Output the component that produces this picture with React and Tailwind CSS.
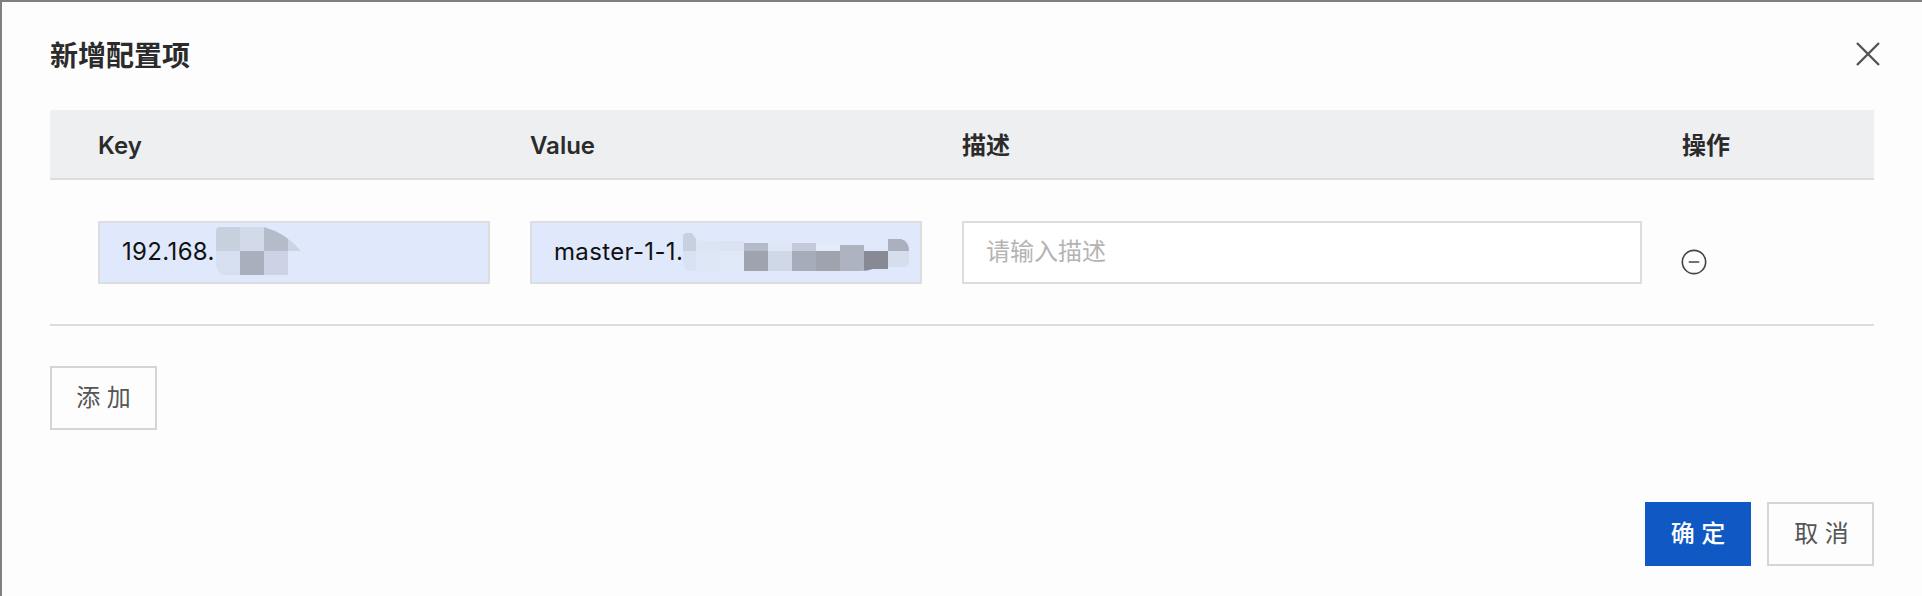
import React from 'react';
import { CircleMinus } from 'lucide-react';

const FONT = "font-['Inter','Noto_Sans_CJK_SC',sans-serif]";

// blurred bits of the redacted values, drawn as mosaic blocks
const KEY_MOSAIC = [
  [0, 6, 24, 24, '#c8d0de'], [24, 6, 24, 24, '#d2d9e8'], [48, 6, 24, 24, '#b4bbc9'], [72, 6, 13, 24, '#ccd3e2'],
  [0, 30, 24, 24, '#d5dff0'], [24, 30, 24, 24, '#a9afbc'], [48, 30, 24, 24, '#ccd3e5'],
];
const KEY_OUTLINE = 'M4 6 L48 6 Q70 12 85 30 L72 30 L72 54 L10 54 Q2 54 0 44 L0 10 Q0 6 4 6 Z';

const VALUE_MOSAIC = [
  [0, 12, 13, 18, '#c8d0de'], [13, 12, 24, 18, '#dde5f5'], [37, 12, 24, 18, '#dbe3f2'], [61, 12, 24, 18, '#b4bac8'],
  [85, 12, 24, 18, '#dfe6f5'], [109, 12, 24, 18, '#c4cad8'], [133, 12, 24, 18, '#e5ebf8'], [157, 12, 24, 18, '#aeb3c0'],
  [205, 12, 21, 18, '#aab0bd'],
  [0, 30, 13, 20, '#d9e2f2'], [13, 30, 24, 20, '#dfe7f6'], [37, 30, 24, 20, '#e0e8f7'], [61, 30, 24, 20, '#9ea3af'],
  [85, 30, 24, 20, '#d0d8e8'], [109, 30, 24, 20, '#a6acb9'], [133, 30, 24, 20, '#9fa3ae'], [157, 30, 24, 20, '#aeb3c1'],
  [181, 30, 24, 20, '#878a95'], [205, 30, 21, 20, '#d6deee'],
];
const VALUE_OUTLINE =
  'M4 12 L9 12 Q13 20 18 20 L61 20 L61 22 L157 22 L157 24 L181 24 L181 30 L205 30 L205 18 L218 18 Q226 20 226 30 L226 40 Q226 46 220 46 L205 46 L205 48 L190 48 Q184 50 178 50 L8 50 Q0 50 0 40 L0 16 Q0 12 4 12 Z';

const Mosaic = ({ id, cells, outline, width, className }) => (
  <svg width={width} height="56" className={`absolute top-[-2px] ${className}`}>
    <clipPath id={id}>
      <path d={outline} />
    </clipPath>
    <g clipPath={`url(#${id})`}>
      {cells.map(([x, y, w, h, fill]) => (
        <rect key={`${x}-${y}`} x={x} y={y} width={w} height={h} fill={fill} />
      ))}
    </g>
  </svg>
);

const FilledInput = ({ text, children }) => (
  <div className="relative flex h-[63px] w-[392px] items-center border-2 border-[#dcdde0] bg-[#e0e9fb] pl-[22px] text-[24px] tracking-[0.35px] text-[#111]">
    {text}
    {children}
  </div>
);

const Button = ({ children, className }) => (
  <button className={`flex items-center justify-center text-[24px] ${className}`}>
    {children}
  </button>
);

export default function App() {
  return (
    <div className={`${FONT} flex h-[596px] flex-col border-t-2 border-l-2 border-[#808080] bg-[#fdfdfd] pr-[48px] pl-[48px]`}>
      {/* title */}
      <div className="flex h-[108px] items-center justify-between">
        <h2 className="text-[28px] leading-none font-semibold text-[#2b2b2b]">新增配置项</h2>
        <svg width="24" height="24" viewBox="0 0 24 24" className="mt-[-4px] mr-[-6px] text-[#555]">
          <path d="M1 1 L23 23 M23 1 L1 23" stroke="currentColor" strokeWidth="2.4" fill="none" />
        </svg>
      </div>

      {/* table */}
      <div className="grid h-[70px] grid-cols-[432px_432px_720px_1fr] items-center border-b-2 border-[#dcdde0] bg-[#eeeff1] pt-[3px] pl-[48px] text-[24px] font-semibold text-[#2b2b2b]">
        <span>Key</span>
        <span>Value</span>
        <span>描述</span>
        <span>操作</span>
      </div>
      <div className="grid h-[146px] grid-cols-[432px_432px_721px_1fr] items-center border-b-2 border-[#dcdde0] pl-[48px]">
        <FilledInput text="192.168.">
          <Mosaic id="key-blur" cells={KEY_MOSAIC} outline={KEY_OUTLINE} width="90" className="left-[116px]" />
        </FilledInput>
        <FilledInput text="master-1-1.">
          <Mosaic id="value-blur" cells={VALUE_MOSAIC} outline={VALUE_OUTLINE} width="230" className="left-[151px]" />
        </FilledInput>
        <div className="flex h-[63px] w-[680px] items-center border-2 border-[#dcdde0] bg-white pl-[22px] text-[24px] text-[#b4b4b4]">
          请输入描述
        </div>
        <CircleMinus size={28} strokeWidth={1.4} className="mt-[20px] ml-[-3px] text-[#444]" />
      </div>

      {/* add */}
      <Button className="mt-[40px] h-[64px] w-[107px] border-2 border-[#d5d5d5] text-[#555]">添 加</Button>

      {/* footer */}
      <div className="mt-[72px] flex justify-end gap-[16px]">
        <Button className="h-[64px] w-[106px] bg-[#1059c4] font-medium text-white">确 定</Button>
        <Button className="h-[64px] w-[107px] border-2 border-[#d5d5d5] pl-[2px] text-[#555]">取 消</Button>
      </div>
    </div>
  );
}
